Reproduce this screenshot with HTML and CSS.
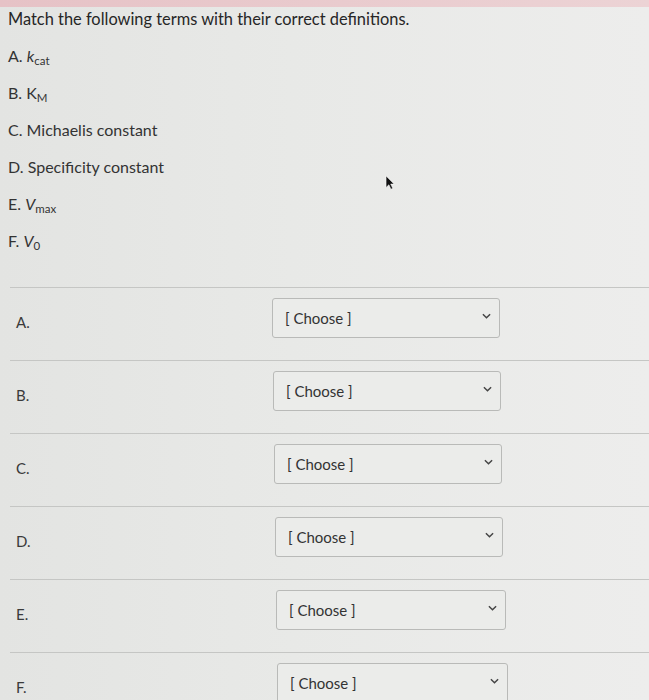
FILE: index.html
```html
<!DOCTYPE html>
<html lang="en">
<head>
<meta charset="utf-8">
<title>Matching question</title>
<link rel="stylesheet" href="styles.css">
</head>
<body>
<div class="topband"></div>
<main class="question">
  <p class="prompt">Match the following terms with their correct definitions.</p>
  <ul class="terms">
    <li>A. <i>k</i><sub>cat</sub></li>
    <li>B. K<sub>M</sub></li>
    <li>C. Michaelis constant</li>
    <li>D. Specificity constant</li>
    <li>E. <i>V</i><sub>max</sub></li>
    <li>F. <i>V</i><sub>0</sub></li>
  </ul>
  <div class="matches">
    <div class="row"><span class="label">A.</span><div class="select s1"><span>[ Choose ]</span><svg class="chev" viewBox="0 0 10 6"><path d="M1 1l4 4 4-4"/></svg></div></div>
    <div class="row"><span class="label">B.</span><div class="select s2"><span>[ Choose ]</span><svg class="chev" viewBox="0 0 10 6"><path d="M1 1l4 4 4-4"/></svg></div></div>
    <div class="row"><span class="label">C.</span><div class="select s3"><span>[ Choose ]</span><svg class="chev" viewBox="0 0 10 6"><path d="M1 1l4 4 4-4"/></svg></div></div>
    <div class="row"><span class="label">D.</span><div class="select s4"><span>[ Choose ]</span><svg class="chev" viewBox="0 0 10 6"><path d="M1 1l4 4 4-4"/></svg></div></div>
    <div class="row"><span class="label">E.</span><div class="select s5"><span>[ Choose ]</span><svg class="chev" viewBox="0 0 10 6"><path d="M1 1l4 4 4-4"/></svg></div></div>
    <div class="row"><span class="label">F.</span><div class="select s6"><span>[ Choose ]</span><svg class="chev" viewBox="0 0 10 6"><path d="M1 1l4 4 4-4"/></svg></div></div>
  </div>
</main>
<svg class="cursor" viewBox="0 0 12 18"><path d="M1 1v13l3.2-3 2.3 5 2-1-2.3-4.8H10z"/></svg>
</body>
</html>
```

FILE: styles.css
```css
html, body {
  margin: 0;
  padding: 0;
}
body {
  width: 649px;
  height: 700px;
  overflow: hidden;
  position: relative;
  background: linear-gradient(90deg, #e3e4e2 0%, #e8e9e7 45%, #ededec 100%);
  font-family: Lato, "Open Sans", sans-serif;
  color: #2e2e2e;
}
.topband {
  height: 7px;
  background: linear-gradient(90deg, #e6c2c6, #ecd3d5);
}
.question {
  padding: 0 0 0 8px;
}
.prompt {
  margin: 0;
  font-size: 16.4px;
  line-height: 24px;
  color: #262626;
}
.terms {
  list-style: none;
  margin: 0;
  padding: 0;
  font-size: 16px;
  color: #333;
}
.terms li {
  height: 37px;
  line-height: 37px;
}
.terms li:first-child {
  margin-top: 6px;
}
.terms sub {
  font-size: 11.5px;
  vertical-align: -3px;
  line-height: 0;
}
.matches {
  margin-top: 28px;
  margin-left: 2px;
}
.row {
  border-top: 1px solid #c5c6c4;
  height: 72px;
  display: flex;
  align-items: flex-start;
}
.label {
  width: 262px;
  padding-left: 6px;
  box-sizing: border-box;
  font-size: 15px;
  color: #3a3a3a;
  margin-top: 25px;
}
.select {
  margin-top: 10px;
  width: 228px;
  height: 40px;
  box-sizing: border-box;
  border: 1px solid #b9bab8;
  border-radius: 3px;
  background: #ebecea;
  display: flex;
  align-items: center;
  justify-content: space-between;
  padding: 0 8px 0 12px;
  font-size: 15px;
  color: #333;
}
.s2 { margin-left: 1px; }
.s3 { margin-left: 2px; }
.s4 { margin-left: 3px; }
.s5 { margin-left: 4px; width: 230px; }
.s6 { margin-left: 5px; width: 231px; }
.chev {
  width: 9px;
  height: 6px;
  fill: none;
  stroke: #444;
  stroke-width: 1.6;
  margin-top: -4px;
}
.cursor {
  position: absolute;
  left: 385px;
  top: 175px;
  width: 11px;
  height: 16px;
  fill: #111;
  stroke: #fff;
  stroke-width: 0.6;
}
```
